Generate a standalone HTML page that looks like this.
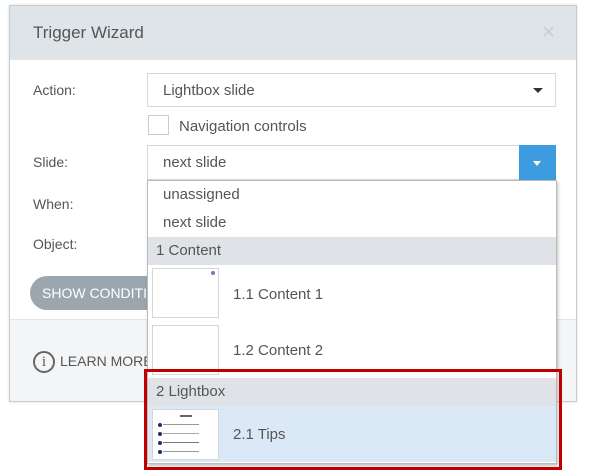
<!DOCTYPE html>
<html><head><style>
*{box-sizing:border-box;margin:0;padding:0}
body{width:600px;height:475px;background:#fff;font-family:"Liberation Sans",sans-serif;position:relative;overflow:hidden;color:#555}
.abs{position:absolute}
.dlg{left:9px;top:5px;width:568px;height:397px;border:1px solid #c8cdd1;background:#fff;box-shadow:0 0 3px rgba(0,0,0,.15)}
.hdr{left:0;top:0;width:566px;height:54px;background:#dfe4e8}
.lbl{font-size:14px;color:#555}
.sel{border:1px solid #d5d9dc;background:#fff;font-size:15px;color:#555;padding-left:15px;line-height:33px}
.row{font-size:15px;color:#555}
.thumb{border:1px solid #d6d6d6;background:#fff;width:67px;height:50px}
.grp{background:#dfe3e7;font-size:15px;color:#555;padding-left:8px;line-height:28px}
</style></head><body>
<div class="abs dlg">
 <div class="abs hdr"></div>
 <div class="abs" style="left:23px;top:17px;font-size:17px;color:#555">Trigger Wizard</div>
 <div class="abs" style="left:531px;top:16px;font-size:18px;color:#c9ced2">✕</div>
 <div class="abs" style="left:0;top:313px;width:566px;height:82px;background:#f4f5f6;border-top:1px solid #e2e5e8"></div>
</div>
<div class="abs lbl" style="left:33px;top:82px">Action:</div>
<div class="abs lbl" style="left:33px;top:154px">Slide:</div>
<div class="abs lbl" style="left:33px;top:196px">When:</div>
<div class="abs lbl" style="left:33px;top:236px">Object:</div>
<div class="abs" style="left:30px;top:276px;width:150px;height:34px;border-radius:17px;background:#9ba6ae;color:#fff;font-size:14px;line-height:34px;padding-left:12px">SHOW CONDITIONS</div>
<div class="abs" style="left:33px;top:351px;width:22px;height:22px;border:2px solid #666;border-radius:50%;font-family:'Liberation Serif',serif;font-size:15px;text-align:center;line-height:18px;color:#555">i</div>
<div class="abs" style="left:60px;top:353px;font-size:14px;color:#555">LEARN MORE</div>

<div class="abs sel" style="left:147px;top:73px;width:409px;height:34px">Lightbox slide</div>
<div class="abs" style="left:533px;top:88px;border-left:5px solid transparent;border-right:5px solid transparent;border-top:5px solid #333"></div>
<div class="abs" style="left:148px;top:115px;width:21px;height:20px;border:1px solid #ccc;background:#fff"></div>
<div class="abs" style="left:179px;top:118px;font-size:15px;color:#555">Navigation controls</div>
<div class="abs sel" style="left:147px;top:145px;width:409px;height:35px">next slide</div>
<div class="abs" style="left:519px;top:145px;width:37px;height:35px;background:#3d9be0"></div>
<div class="abs" style="left:533px;top:161px;border-left:4px solid transparent;border-right:4px solid transparent;border-top:5px solid #fff"></div>

<div class="abs" style="left:147px;top:180px;width:410px;height:284px;border:1px solid #bbb;background:#fff;box-shadow:1px 2px 3px rgba(0,0,0,.25)"></div>
<div class="abs row" style="left:163px;top:186px">unassigned</div>
<div class="abs row" style="left:163px;top:214px">next slide</div>
<div class="abs grp" style="left:148px;top:237px;width:408px;height:28px">1 Content</div>
<div class="abs thumb" style="left:152px;top:268px"></div>
<div class="abs" style="left:211px;top:271px;width:4px;height:4px;border-radius:50%;background:#8a6fb5"></div>
<div class="abs row" style="left:233px;top:286px">1.1 Content 1</div>
<div class="abs thumb" style="left:152px;top:325px"></div>
<div class="abs row" style="left:233px;top:342px">1.2 Content 2</div>
<div class="abs grp" style="left:148px;top:378px;width:408px;height:28px">2 Lightbox</div>
<div class="abs" style="left:148px;top:406px;width:408px;height:56px;background:#dbe9f6"></div>
<div class="abs thumb" style="left:152px;top:409px;height:51px">
 <div style="position:absolute;left:27px;top:5px;width:12px;height:2px;background:#666"></div>
 <div style="position:absolute;left:5px;top:13px;width:4px;height:4px;border-radius:50%;background:#1f2d6b"></div><div style="position:absolute;left:10px;top:14px;width:36px;height:1px;background:#999"></div>
 <div style="position:absolute;left:5px;top:22px;width:4px;height:4px;border-radius:50%;background:#1f2d6b"></div><div style="position:absolute;left:10px;top:23px;width:36px;height:1px;background:#aaa"></div>
 <div style="position:absolute;left:5px;top:31px;width:4px;height:4px;border-radius:50%;background:#1f2d6b"></div><div style="position:absolute;left:10px;top:32px;width:36px;height:1px;background:#777"></div>
 <div style="position:absolute;left:5px;top:40px;width:4px;height:4px;border-radius:50%;background:#1f2d6b"></div><div style="position:absolute;left:10px;top:41px;width:36px;height:1px;background:#999"></div>
</div>
<div class="abs row" style="left:233px;top:426px">2.1 Tips</div>
<div class="abs" style="left:144px;top:369px;width:418px;height:101px;border:3px solid #c00000"></div>
</body></html>
